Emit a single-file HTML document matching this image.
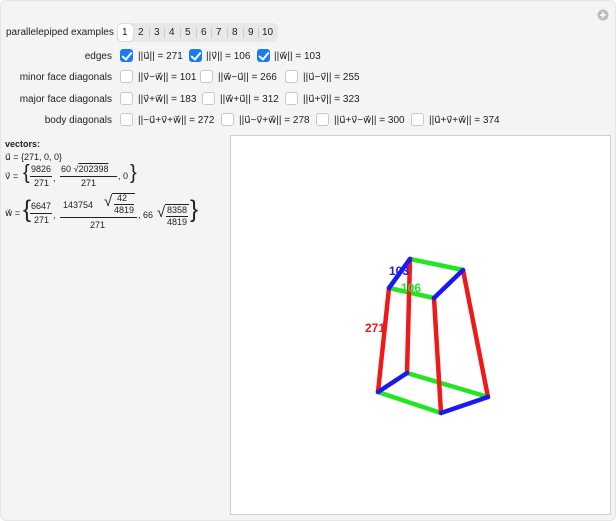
<!DOCTYPE html>
<html><head><style>
body{margin:0;width:616px;height:521px;background:#fff;font-family:"Liberation Sans",sans-serif;font-size:10px;color:#222;position:relative;overflow:hidden}
#app{position:absolute;left:0;top:0;width:614px;height:519px;background:#f4f4f4;border:1px solid #e6e6e6;border-radius:6px}
.a{position:absolute;white-space:nowrap}
.lbl{position:absolute;text-align:right;width:112px;left:0}
.cb{position:absolute;width:13px;height:13px;border:1px solid #c8c8c8;border-radius:3px;background:#fff;box-sizing:border-box}
.cb.on{background:#1a7cf4;border-color:#1a7cf4}
.cb.on:after{content:"";position:absolute;left:3px;top:0px;width:4px;height:8px;border:solid #fff;border-width:0 2px 2px 0;transform:rotate(40deg)}
.tabs{position:absolute;left:117px;top:23px;height:19px;background:#e8e8e8;border-radius:5px;width:161px}
.tab{position:absolute;top:4px;font-size:10px}
.sep{position:absolute;top:5px;width:1px;height:10px;background:#ccc}
#plot{position:absolute;left:230px;top:135px;width:379px;height:378px;background:#fff;border:1px solid #cfcfcf}
.v{font-size:9px}
.hl{position:absolute;height:1px;background:#222}
</style></head><body>
<div id="app"></div>
<svg class="a" style="left:597px;top:9px" width="12" height="12"><circle cx="6" cy="6" r="5.5" fill="#bdbdbd"/><path d="M6 3v6M3 6h6" stroke="#fff" stroke-width="1.5"/></svg>
<div class="a" style="left:6px;top:27px">parallelepiped examples</div>
<div class="tabs">
<div style="position:absolute;left:1px;top:1px;width:15px;height:17px;background:#fff;border-radius:4px;box-shadow:0 0 1px #999"></div>
<span class="tab" style="left:5px">1</span><span class="tab" style="left:21px">2</span><span class="tab" style="left:37px">3</span><span class="tab" style="left:52px">4</span><span class="tab" style="left:68px">5</span><span class="tab" style="left:84px">6</span><span class="tab" style="left:99px">7</span><span class="tab" style="left:115px">8</span><span class="tab" style="left:131px">9</span><span class="tab" style="left:145px">10</span>
<i class="sep" style="left:32px"></i><i class="sep" style="left:47px"></i><i class="sep" style="left:63px"></i><i class="sep" style="left:79px"></i><i class="sep" style="left:94px"></i><i class="sep" style="left:110px"></i><i class="sep" style="left:126px"></i><i class="sep" style="left:141px"></i>
</div>

<div class="lbl" style="top:51px">edges</div>
<div class="cb on" style="left:120px;top:49px"></div><div class="a" style="left:138px;top:51px">||u⃗|| = 271</div>
<div class="cb on" style="left:189px;top:49px"></div><div class="a" style="left:206px;top:51px">||v⃗|| = 106</div>
<div class="cb on" style="left:257px;top:49px"></div><div class="a" style="left:274px;top:51px">||w⃗|| = 103</div>

<div class="lbl" style="top:72px">minor face diagonals</div>
<div class="cb" style="left:120px;top:70px"></div><div class="a" style="left:138px;top:72px">||v⃗−w⃗|| = 101</div>
<div class="cb" style="left:200px;top:70px"></div><div class="a" style="left:218px;top:72px">||w⃗−u⃗|| = 266</div>
<div class="cb" style="left:285px;top:70px"></div><div class="a" style="left:303px;top:72px">||u⃗−v⃗|| = 255</div>

<div class="lbl" style="top:94px">major face diagonals</div>
<div class="cb" style="left:120px;top:92px"></div><div class="a" style="left:138px;top:94px">||v⃗+w⃗|| = 183</div>
<div class="cb" style="left:202px;top:92px"></div><div class="a" style="left:220px;top:94px">||w⃗+u⃗|| = 312</div>
<div class="cb" style="left:285px;top:92px"></div><div class="a" style="left:303px;top:94px">||u⃗+v⃗|| = 323</div>

<div class="lbl" style="top:115px">body diagonals</div>
<div class="cb" style="left:120px;top:113px"></div><div class="a" style="left:138px;top:115px">||−u⃗+v⃗+w⃗|| = 272</div>
<div class="cb" style="left:221px;top:113px"></div><div class="a" style="left:239px;top:115px">||u⃗−v⃗+w⃗|| = 278</div>
<div class="cb" style="left:316px;top:113px"></div><div class="a" style="left:334px;top:115px">||u⃗+v⃗−w⃗|| = 300</div>
<div class="cb" style="left:411px;top:113px"></div><div class="a" style="left:429px;top:115px">||u⃗+v⃗+w⃗|| = 374</div>

<div class="a v" style="left:5px;top:139px;font-weight:bold">vectors:</div>
<div class="a v" style="left:5px;top:152px">u⃗ = {271, 0, 0}</div>
<!-- v row -->
<div class="a v" style="left:5px;top:171px">v⃗ =</div>
<div class="a" style="left:23px;top:162px;font-size:20px;font-weight:300">{</div>
<div class="a v" style="left:31px;top:164px">9826</div><div class="hl" style="left:30px;top:176px;width:22px"></div><div class="a v" style="left:34px;top:178px">271</div>
<div class="a v" style="left:53px;top:173px">,</div>
<div class="a v" style="left:61px;top:164px">60 √<span style="text-decoration:overline">202398</span></div><div class="hl" style="left:60px;top:176px;width:57px"></div><div class="a v" style="left:81px;top:178px">271</div>
<div class="a v" style="left:118px;top:171px">, 0</div>
<div class="a" style="left:130px;top:162px;font-size:20px;font-weight:300">}</div>
<!-- w row -->
<div class="a v" style="left:5px;top:208px">w⃗ =</div>
<div class="a" style="left:23px;top:196px;font-size:24px;font-weight:300">{</div>
<div class="a v" style="left:31px;top:201px">6647</div><div class="hl" style="left:30px;top:213px;width:22px"></div><div class="a v" style="left:34px;top:215px">271</div>
<div class="a v" style="left:53px;top:210px">,</div>
<div class="a v" style="left:63px;top:200px">143754</div>
<div class="a" style="left:104px;top:193px;font-size:15px">√</div>
<div class="hl" style="left:112px;top:193px;width:23px"></div>
<div class="a v" style="left:117px;top:193px">42</div><div class="hl" style="left:114px;top:204px;width:20px"></div><div class="a v" style="left:114px;top:205px">4819</div>
<div class="hl" style="left:60px;top:217px;width:77px"></div><div class="a v" style="left:90px;top:220px">271</div>
<div class="a v" style="left:138px;top:210px">, 66</div>
<div class="a" style="left:157px;top:204px;font-size:15px">√</div>
<div class="hl" style="left:165px;top:204px;width:24px"></div>
<div class="a v" style="left:167px;top:205px">8358</div><div class="hl" style="left:166px;top:216px;width:22px"></div><div class="a v" style="left:167px;top:217px">4819</div>
<div class="a" style="left:190px;top:196px;font-size:24px;font-weight:300">}</div>

<div id="plot"></div>
<svg class="a" style="left:0;top:0" width="616" height="521">
<g stroke-width="4.5" stroke-linecap="round">
<path d="M378 392L441 413M407 373L488 397M410 259L463 270M389 288L434 298" stroke="#22e622"/>
<path d="M389 288L378 392M410 259L407 373M434 298L441 413M463 270L488 397" stroke="#f01818"/>
<path d="M378 392L407 373M441 413L488 397M389 288L410 259M434 298L463 270" stroke="#1a1af0"/>
</g>
<g font-family="Liberation Sans" font-weight="bold" font-size="12">
<text x="389" y="275" fill="#1a1af0">103</text>
<text x="401" y="292" fill="#22e622">106</text>
<text x="365" y="332" fill="#f01818">271</text>
</g>
</svg>
</body></html>
